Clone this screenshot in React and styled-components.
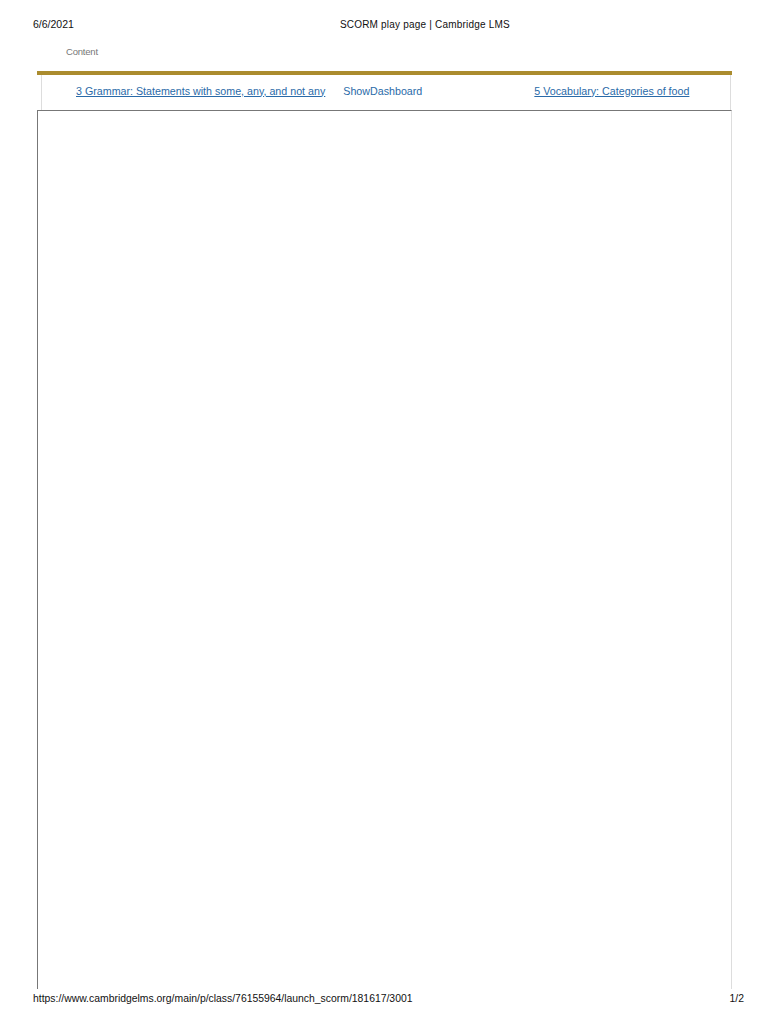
import styled, { createGlobalStyle } from "styled-components"

const Global = createGlobalStyle`
    html, body {
        margin: 0;
        padding: 0;
        background: #fff;
        font-family: "Liberation Sans", Arial, sans-serif;
    }
`

const Page = styled.div`
    width: 768px;
    height: 1024px;
    display: flex;
    flex-direction: column;
    box-sizing: border-box;
    padding: 0 24px 0 33px;
`

const PrintHeader = styled.div`
    display: flex;
    align-items: center;
    height: 12px;
    margin-top: 18px;
    font-size: 10.5px;
    color: #111;
`

const Title = styled.span`
    margin-left: 266px;
    font-size: 10px;
    letter-spacing: 0.2px;
`

const Crumb = styled.div`
    margin: 16px 0 0 33px;
    font-size: 9.5px;
    color: #777;
    height: 12px;
    letter-spacing: -0.2px;
`

const Frame = styled.div`
    margin: 13px 12px 0 4px;
    display: flex;
    flex-direction: column;
    height: 918px;
`

const GoldBar = styled.div`
    height: 4px;
    background: #ab8c2e;
`

const Nav = styled.div`
    display: flex;
    align-items: center;
    height: 31px;
    margin: 0 1px 0 4px;
    padding: 0 0 4px 34px;
    border-left: 1px solid #ddd;
    border-right: 1px solid #ddd;
    font-size: 10.7px;
`

const NavLink = styled.a`
    color: #2a6aa8;
    text-decoration: ${(p) => (p.$plain ? "none" : "underline")};
    margin-left: ${(p) => p.$gap || 0}px;
    white-space: nowrap;
`

const Player = styled.div`
    flex: 1;
    border-top: 1.5px solid #777;
    border-left: 1.5px solid #777;
    border-right: 1px solid #ddd;
`

const PrintFooter = styled.div`
    display: flex;
    justify-content: space-between;
    align-items: center;
    margin-top: 4px;
    font-size: 10.4px;
    color: #111;
`

export default function App() {
    return (
        <Page>
            <Global />
            <PrintHeader>
                <span>6/6/2021</span>
                <Title>SCORM play page | Cambridge LMS</Title>
            </PrintHeader>
            <Crumb>Content</Crumb>
            <Frame>
                <GoldBar />
                <Nav>
                    <NavLink href="#">3 Grammar: Statements with some, any, and not any</NavLink>
                    <NavLink href="#" $plain $gap={18}>ShowDashboard</NavLink>
                    <NavLink href="#" $gap={112}>5 Vocabulary: Categories of food</NavLink>
                </Nav>
                <Player />
            </Frame>
            <PrintFooter>
                <span>https://www.cambridgelms.org/main/p/class/76155964/launch_scorm/181617/3001</span>
                <span>1/2</span>
            </PrintFooter>
        </Page>
    )
}
